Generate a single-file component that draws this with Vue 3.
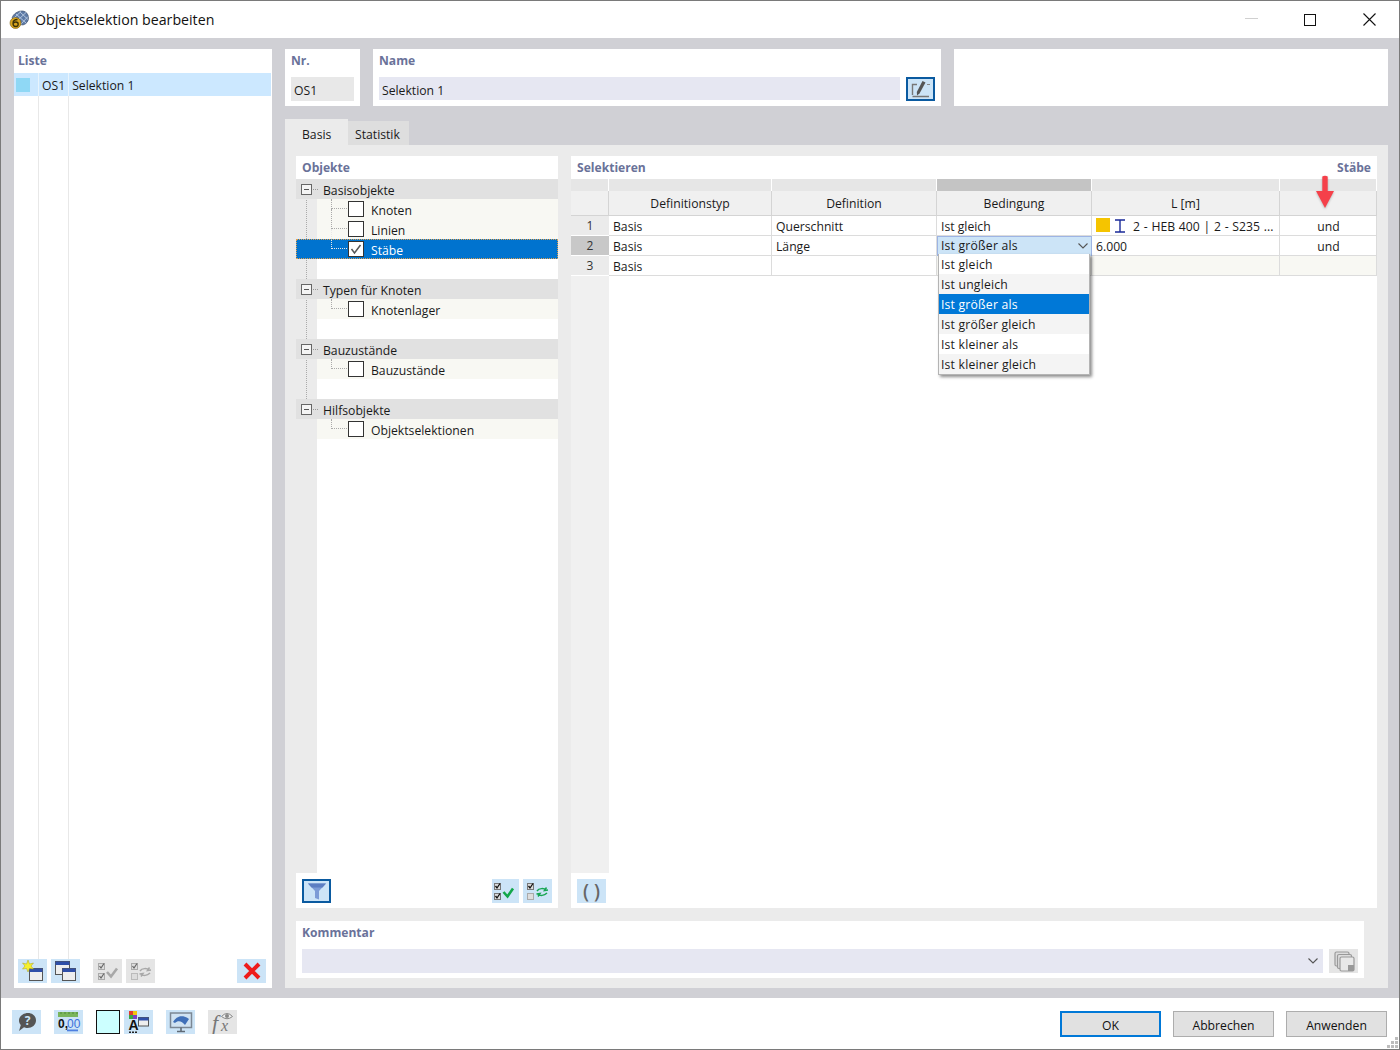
<template>
  <div class="window">
    <header class="titlebar">
      <svg class="app-icon" width="20" height="20" viewBox="0 0 20 20">
        <path d="M3 8 C4 4 9 0.500 14 1 C17 1.500 19.500 4 19.500 8 C19.500 11 17.500 14 14 15 L8 14 Z" fill="#5d7aa6" stroke="#3d4c66" stroke-width=".6" />
        <path d="M7 4 L17 13 M11 2 L19 9.500 M4.500 7 L12 14.500 M8 11 L17 2.500 M5 8 L12 1.500 M12 14 L19 6.500" stroke="#b4c6de" stroke-width="1" />
        <circle cx="6.500" cy="13" r="5.500" fill="#d8a51e" stroke="#7a5e12" stroke-width=".6" />
        <path d="M8.500 9.500 C5.500 9.500 4 11.500 4 13.500 C4 15.500 5.200 16.500 6.700 16.500 C8.200 16.500 9.200 15.500 9.200 14.200 C9.200 12.900 8.200 12 6.800 12 C5.800 12 4.800 12.500 4.300 13.300" fill="none" stroke="#3c3208" stroke-width="1.300" />
      </svg>
      <span class="window-title">Objektselektion bearbeiten</span>
      <div class="window-controls">
        <span class="ctl-min" />
        <span class="ctl-max" />
        <svg class="ctl-close" width="13" height="13" viewBox="0 0 13 13">
          <path d="M.5 .5 L12.500 12.500 M12.500 .5 L.5 12.500" stroke="#111" stroke-width="1.100" />
        </svg>
      </div>
    </header>

    <main class="main">
      <aside class="list-panel">
        <div class="panel-title">Liste</div>
        <div class="list-row">
          <span class="list-swatch" />
          <span class="list-code">OS1</span>
          <span>Selektion 1</span>
        </div>
        <div class="list-body">
          <span class="list-rule rule-a" />
          <span class="list-rule rule-b" />
        </div>
        <div class="list-tools">
          <button class="tool blue">
            <svg width="24" height="24" viewBox="0 0 24 24">
              <rect x="8.500" y="9.500" width="13" height="12" fill="#eee" stroke="#555" />
              <rect x="8.500" y="9.500" width="13" height="3.500" fill="#2f4fa8" />
              <path d="M7 1 L8.500 5 L12.500 4 L10 7 L12.500 10 L8.500 9.500 L7 13 L5.500 9.500 L1.500 10 L4 7 L1.500 4 L5.500 5 Z" fill="#f6f02c" stroke="#a9a020" stroke-width=".5" />
            </svg>
          </button>
          <button class="tool blue">
            <svg width="24" height="24" viewBox="0 0 24 24">
              <rect x="1.500" y="2.500" width="14" height="13" fill="#eee" stroke="#555" />
              <rect x="1.500" y="2.500" width="14" height="3.500" fill="#2f4fa8" />
              <rect x="8.500" y="9.500" width="13" height="12" fill="#eee" stroke="#555" />
              <rect x="8.500" y="9.500" width="13" height="3.500" fill="#2f4fa8" />
            </svg>
          </button>
          <button class="tool gray gap-a">
            <svg width="24" height="24" viewBox="0 0 24 24">
              <rect x="2.500" y="4.500" width="6" height="6" fill="#ddd" stroke="#aaa" />
              <rect x="2.500" y="14.500" width="6" height="6" fill="#ddd" stroke="#aaa" />
              <path d="M3.500 7 L5 9 L8 4.500 M3.500 17 L5 19 L8 14.500" fill="none" stroke="#666" stroke-width="1.200" />
              <path d="M11 13 L15 17.500 L21 9.500" fill="none" stroke="#a8a8a8" stroke-width="2.600" />
            </svg>
          </button>
          <button class="tool gray">
            <svg width="24" height="24" viewBox="0 0 24 24">
              <rect x="2.500" y="4.500" width="6" height="6" fill="#ddd" stroke="#aaa" />
              <rect x="2.500" y="14.500" width="6" height="6" fill="#ddd" stroke="#bbb" />
              <path d="M3.500 7 L5 9 L8 4.500" fill="none" stroke="#666" stroke-width="1.200" />
              <path d="M11 12 C13 9 18 9 20 11 M22 11 L18.500 11.500 L20.500 8.500 M21 14 C18 17 14 17 12 15 M10.500 15 L14 14.500 L12 17.500" fill="none" stroke="#a8a8a8" stroke-width="1.500" />
            </svg>
          </button>
          <button class="tool blue push-right">
            <svg width="24" height="24" viewBox="0 0 24 24">
              <path d="M5 5 L19 19 M19 5 L5 19" stroke="#ee1c1c" stroke-width="4" />
            </svg>
          </button>
        </div>
      </aside>

      <section class="content">
        <div class="top-row">
          <div class="top-box nr-box">
            <div class="panel-title">Nr.</div>
            <div class="field field-gray">OS1</div>
          </div>
          <div class="top-box name-box">
            <div class="panel-title">Name</div>
            <div class="name-row">
              <div class="field field-lilac name-field">Selektion 1</div>
              <button class="tool blue outlined">
                <svg width="25" height="20" viewBox="0 0 25 20">
                  <path d="M9 5.500 H4.500 V16 M4.500 17.500 H21" fill="none" stroke="#777" stroke-width="1.400" />
                  <path d="M19 5.500 H22" stroke="#888" />
                  <path d="M14.500 2 L17.500 3.500 L11.500 14.500 L9 16.500 L8.800 13 Z" fill="#555" />
                </svg>
              </button>
            </div>
          </div>
          <div class="top-box blank-box" />
        </div>

        <nav class="tabs">
          <span class="tab active">Basis</span>
          <span class="tab">Statistik</span>
        </nav>

        <div class="tab-panel">
          <div class="tab-columns">
            <section class="objects">
              <div class="panel-title">Objekte</div>
              <div class="tree">
                <div v-for="group in groups" :key="group.name" class="tree-group">
                  <div class="tree-head">
                    <span class="expander" />
                    <span class="head-dots" />
                    {{ group.name }}
                  </div>
                  <div
                    v-for="(item, i) in group.items"
                    :key="item"
                    class="tree-item"
                    :class="{ selected: item === 'Stäbe' }"
                  >
                    <span class="tree-elbow" :class="{ first: i === 0 }" />
                    <span class="check">
                      <svg v-if="item === 'Stäbe'" width="14" height="14" viewBox="0 0 14 14">
                        <path d="M2.500 7 L5.500 11 L11.500 3" fill="none" stroke="#555" stroke-width="1.500" />
                      </svg>
                    </span>
                    <span>{{ item }}</span>
                  </div>
                  <div class="tree-spacer" />
                </div>
              </div>
              <div class="panel-tools">
                <button class="tool blue filter-btn">
                  <svg width="20" height="20" viewBox="0 0 20 20">
                    <path d="M1 2.500 H19 L12 10 V18.500 L8 17 V10 Z" fill="#7c9bd6" />
                    <path d="M1 2.500 H19 L15.500 6.500 H4.500 Z" fill="#5b7dc2" />
                  </svg>
                </button>
                <button class="tool blue ok-all">
                  <svg width="27" height="24" viewBox="0 0 27 24">
                    <rect x="2.500" y="4.500" width="6" height="6" fill="#ddd" stroke="#777" />
                    <rect x="2.500" y="14.500" width="6" height="6" fill="#ddd" stroke="#777" />
                    <path d="M3.500 7 L5 9 L8 4.500 M3.500 17 L5 19 L8 14.500" fill="none" stroke="#111" stroke-width="1.300" />
                    <path d="M11.500 13 L15.500 17.500 L21 9.500" fill="none" stroke="#12a74a" stroke-width="2.600" />
                  </svg>
                </button>
                <button class="tool blue">
                  <svg width="29" height="24" viewBox="0 0 29 24">
                    <rect x="4.500" y="4.500" width="6" height="6" fill="#ddd" stroke="#777" />
                    <rect x="4.500" y="14.500" width="6" height="6" fill="#ddd" stroke="#aaa" />
                    <path d="M5.500 7 L7 9 L10 4.500" fill="none" stroke="#111" stroke-width="1.300" />
                    <path d="M14 12 C16 9 21 9 23 11 M25 11 L21.500 11.500 L23.500 8.500 M24 14 C21 17 17 17 15 15 M13.500 15 L17 14.500 L15 17.500" fill="none" stroke="#17a553" stroke-width="1.500" />
                  </svg>
                </button>
              </div>
            </section>

            <section class="selection">
              <div class="selection-title">
                <span class="panel-title">Selektieren</span>
                <span class="panel-title">Stäbe</span>
              </div>
              <div class="grid-wrap">
                <div class="gutter" />
                <div class="sel-grid">
                  <div
                    v-for="(col, i) in 6"
                    :key="'band' + i"
                    class="band"
                    :class="{ 'band-active': i === 3 }"
                  />
                  <div v-for="(head, i) in headers" :key="'head' + i" class="head-cell">{{ head }}</div>

                  <div class="num">1</div>
                  <div class="cell">Basis</div>
                  <div class="cell">Querschnitt</div>
                  <div class="cell">Ist gleich</div>
                  <div class="cell section-cell">
                    <span class="yellow-box" />
                    <svg width="12" height="14" viewBox="0 0 12 14">
                      <path d="M1 1 H11 M1 13 H11 M6 1 V13" stroke="#1a2a99" stroke-width="1.400" fill="none" />
                    </svg>
                    <span class="section-text">2 - HEB 400 | 2 - S235 ...</span>
                  </div>
                  <div class="cell center">und</div>

                  <div class="num num-active">2</div>
                  <div class="cell">Basis</div>
                  <div class="cell">Länge</div>
                  <div class="cell combo-cell">
                    <span>Ist größer als</span>
                    <svg width="10" height="6" viewBox="0 0 10 6">
                      <path d="M.5 .5 L5 5 L9.500 .5" fill="none" stroke="#555" stroke-width="1.100" />
                    </svg>
                  </div>
                  <div class="cell">6.000</div>
                  <div class="cell center">und</div>

                  <div class="num">3</div>
                  <div class="cell">Basis</div>
                  <div class="cell" />
                  <div class="cell tint" />
                  <div class="cell tint" />
                  <div class="cell tint" />
                </div>

                <ul class="dropdown">
                  <li
                    v-for="opt in options"
                    :key="opt"
                    :class="{ current: opt === 'Ist größer als' }"
                  >{{ opt }}</li>
                </ul>

                <svg class="red-arrow" width="20" height="34" viewBox="0 0 20 34">
                  <path d="M7.300 1.500 Q10 0 12.700 1.500 V16 H19 L10 33 L1 16 H7.300 Z" fill="#f5404a" />
                </svg>
              </div>
              <div class="panel-tools">
                <button class="tool blue paren-btn">( )</button>
              </div>
            </section>
          </div>

          <section class="comment">
            <div class="panel-title">Kommentar</div>
            <div class="comment-row">
              <div class="field field-lilac comment-field">
                <svg width="10" height="6" viewBox="0 0 10 6">
                  <path d="M.5 .5 L5 5 L9.500 .5" fill="none" stroke="#555" stroke-width="1.100" />
                </svg>
              </div>
              <button class="tool gray">
                <svg width="24" height="24" viewBox="0 0 24 24">
                  <rect x="3" y="3" width="14" height="14" rx="1.500" fill="#ddd" stroke="#999" stroke-width="1.200" />
                  <rect x="5.500" y="5.500" width="14" height="14" rx="1.500" fill="#ddd" stroke="#999" stroke-width="1.200" />
                  <rect x="8" y="8" width="14" height="14" rx="1.500" fill="#e8e8e8" stroke="#999" stroke-width="1.200" />
                  <rect x="16" y="16" width="6" height="6" fill="#999" />
                </svg>
              </button>
            </div>
          </section>
        </div>
      </section>
    </main>

    <footer class="footer">
      <div class="footer-tools">
        <button class="tool blue">
          <svg width="24" height="24" viewBox="0 0 24 24">
            <path d="M13 3 C18 3 21 6.500 21 10.500 C21 15 17 18 12.500 18 C11 18 10 17.800 9 17.300 L4 21 L5.800 15 C4.500 13.500 4 12 4 10.500 C4 6.500 8 3 13 3 Z" fill="#555" />
            <text x="12.500" y="15" class="qmark">?</text>
          </svg>
        </button>
        <button class="tool blue">
          <svg width="29" height="24" viewBox="0 0 29 24">
            <rect x="4" y="2" width="20" height="5" fill="#7ab55c" />
            <path d="M7 2 V4 M11 2 V4 M15 2 V4 M19 2 V4 M23 2 V4" stroke="#4f8a3a" />
            <text x="4" y="18" class="num-black">0,</text>
            <text x="13" y="18" class="num-blue">00</text>
            <rect x="13" y="19.500" width="11" height="1.800" fill="#4d7fe0" />
          </svg>
        </button>
        <span class="color-box" />
        <button class="tool blue">
          <svg width="24" height="24" viewBox="0 0 24 24">
            <rect x="2" y="1" width="4" height="4" fill="#e23b2e" />
            <rect x="6" y="1" width="4" height="4" fill="#f1c40f" />
            <rect x="2" y="5" width="4" height="4" fill="#35a845" />
            <rect x="6" y="5" width="4" height="4" fill="#7b3fc4" />
            <text x="1.500" y="20" class="letter-a">A</text>
            <path d="M2 21.500 H4 V23 H2 Z M5 21.500 H7 V23 H5 Z M8 21.500 H10 V23 H8 Z" fill="#222" />
            <rect x="11.500" y="7.500" width="10" height="8.500" fill="#eee" stroke="#555" />
            <rect x="11.500" y="7.500" width="10" height="3" fill="#2f4fa8" />
          </svg>
        </button>
        <button class="tool blue">
          <svg width="24" height="24" viewBox="0 0 24 24">
            <rect x="1.500" y="3" width="21" height="14.500" fill="#cfe2f2" stroke="#7b8794" stroke-width="1.500" />
            <path d="M4 12 C7 6 14 4 20 9 L16 15 C13 11 9 10 6 13 Z" fill="#3f6fb8" />
            <path d="M12 17.500 V21 M8 21.500 H16" stroke="#5f6a76" stroke-width="1.600" />
          </svg>
        </button>
        <button class="tool gray">
          <svg width="24" height="24" viewBox="0 0 24 24">
            <text x="1" y="20" class="fx-f">f</text>
            <text x="10" y="21" class="fx-x">x</text>
            <path d="M10.500 6.500 Q16 .5 21.500 6.500 Q16 11 10.500 6.500 Z" fill="#eee" stroke="#888" />
            <circle cx="16" cy="6" r="2" fill="#888" />
          </svg>
        </button>
      </div>
      <div class="footer-buttons">
        <button class="dlg-btn primary">OK</button>
        <button class="dlg-btn">Abbrechen</button>
        <button class="dlg-btn">Anwenden</button>
      </div>
      <svg class="grip" width="11" height="11" viewBox="0 0 11 11">
        <path d="M8 0 h3 v3 h-3 Z M4 4 h3 v3 h-3 Z M8 4 h3 v3 h-3 Z M0 8 h3 v3 h-3 Z M4 8 h3 v3 h-3 Z M8 8 h3 v3 h-3 Z" fill="#bdbdbd" />
      </svg>
    </footer>
  </div>
</template>

<script setup>
const groups = [
  { name: "Basisobjekte", items: ["Knoten", "Linien", "Stäbe"] },
  { name: "Typen für Knoten", items: ["Knotenlager"] },
  { name: "Bauzustände", items: ["Bauzustände"] },
  { name: "Hilfsobjekte", items: ["Objektselektionen"] }
];

const headers = ["", "Definitionstyp", "Definition", "Bedingung", "L [m]", ""];

const options = [
  "Ist gleich",
  "Ist ungleich",
  "Ist größer als",
  "Ist größer gleich",
  "Ist kleiner als",
  "Ist kleiner gleich"
];
</script>

<style>
html, body {
  margin: 0;
  background: #fff;
}
</style>

<style scoped>
.window {
  box-sizing: border-box;
  width: 1400px;
  height: 1050px;
  display: flex;
  flex-direction: column;
  border: 1px solid #7a7a7a;
  font-family: "Open Sans", "Noto Sans", sans-serif;
  font-size: 12.2px;
  color: #1a1a1a;
  background: #fff;
  overflow: hidden;
}

button {
  font-family: inherit;
  padding: 0;
  border: 0;
}

/* TITLE BAR */
.titlebar {
  height: 37px;
  flex-shrink: 0;
  display: flex;
  align-items: center;
  padding-left: 8px;
}

.app-icon {
  margin-right: 6px;
}

.window-title {
  font-size: 14.2px;
  color: #111;
}

.window-controls {
  margin-left: auto;
  display: flex;
  align-items: center;
}

.ctl-min {
  width: 13px;
  height: 1px;
  margin-top: -3px;
  margin-right: 46px;
  background: #d0d0d0;
}

.ctl-max {
  box-sizing: border-box;
  width: 12px;
  height: 12px;
  border: 1.500px solid #111;
  margin-right: 47px;
}

.ctl-close {
  margin-right: 23px;
}

/* MAIN */
.main {
  flex: 1;
  min-height: 0;
  display: flex;
  gap: 13px;
  padding: 11px 11px 10px 13px;
  background: #d0d0d5;
}

.panel-title {
  font-weight: 700;
  font-size: 12.1px;
  color: #6a7299;
}

.list-panel {
  width: 258px;
  flex-shrink: 0;
  display: flex;
  flex-direction: column;
  background: #fff;
}

.list-panel > .panel-title {
  height: 24px;
  line-height: 23px;
  padding-left: 4px;
}

.list-row {
  height: 23px;
  display: flex;
  align-items: center;
  margin-right: 1px;
  padding-top: 1px;
  box-sizing: border-box;
  background:
    linear-gradient(#e8f4fd, #e8f4fd) 24px 0 / 1px 100% no-repeat,
    linear-gradient(#e8f4fd, #e8f4fd) 54px 0 / 1px 100% no-repeat,
    #cce8ff;
}

.list-swatch {
  width: 14px;
  height: 14px;
  margin-left: 2px;
  margin-top: -1px;
  background: #8fd8f5;
}

.list-code {
  margin-left: 12px;
  margin-right: 7px;
}

.list-body {
  flex: 1;
  position: relative;
}

.list-rule {
  position: absolute;
  top: 0;
  bottom: 0;
  width: 1px;
  background: #e8e8e8;
}

.rule-a { left: 24px; }
.rule-b { left: 54px; }

.list-tools {
  display: flex;
  align-items: center;
  height: 29px;
  box-sizing: border-box;
  padding: 0 6px 5px 4px;
}

.list-tools .tool + .tool {
  margin-left: 4px;
}

.list-tools .gap-a {
  margin-left: 13px !important;
}

.list-tools .push-right {
  margin-left: auto !important;
}

.tool {
  width: 29px;
  height: 24px;
  display: inline-flex;
  align-items: center;
  justify-content: center;
  flex-shrink: 0;
}

.tool.blue { background: #cce4f7; }
.tool.gray { background: #e5e5e5; }

.outlined,
.filter-btn {
  box-sizing: border-box;
  border: 2px solid #0a5aa0;
}

/* RIGHT SIDE */
.content {
  flex: 1;
  min-width: 0;
  display: flex;
  flex-direction: column;
}

.top-row {
  height: 57px;
  flex-shrink: 0;
  display: flex;
  gap: 13px;
}

.top-box {
  background: #fff;
  box-sizing: border-box;
}

.top-box > .panel-title {
  height: 28px;
  line-height: 23px;
}

.nr-box {
  width: 75px;
  padding: 0 6px;
}

.name-box {
  width: 568px;
  padding: 0 6px;
}

.blank-box {
  flex: 1;
}

.field {
  height: 24px;
  line-height: 28px;
  box-sizing: border-box;
  padding-left: 3px;
}

.field-gray { background: #e8e8e8; }
.field-lilac { background: #e6e7f2; }

.name-row {
  display: flex;
  gap: 6px;
}

.name-field {
  flex: 1;
  height: 23px;
}

/* TABS */
.tabs {
  display: flex;
  align-items: flex-end;
  height: 39px;
  flex-shrink: 0;
}

.tab {
  box-sizing: border-box;
  width: 61px;
  height: 24px;
  line-height: 28px;
  padding-left: 7px;
  background: #dedede;
}

.tab.active {
  width: 63px;
  height: 26px;
  line-height: 26px;
  padding: 3px 0 0 17px;
  background: #ebebeb;
}

.tab-panel {
  flex: 1;
  min-height: 0;
  display: flex;
  flex-direction: column;
  gap: 13px;
  padding: 11px 11px 10px;
  background: #ebebeb;
}

.tab-columns {
  flex: 1;
  min-height: 0;
  display: flex;
  gap: 13px;
}

/* OBJECTS TREE */
.objects {
  width: 262px;
  flex-shrink: 0;
  display: flex;
  flex-direction: column;
  background: #fff;
}

.objects > .panel-title {
  height: 23px;
  line-height: 23px;
  padding-left: 6px;
}

.tree {
  flex: 1;
  min-height: 0;
  background: linear-gradient(to right, #ebebeb 21px, #fff 21px);
}

.tree-group {
  position: relative;
}

.tree-group:not(:last-child)::before {
  content: "";
  position: absolute;
  left: 10px;
  top: 15px;
  bottom: -6px;
  border-left: 1px dotted #aaa;
}

.tree-head {
  position: relative;
  height: 20px;
  line-height: 24px;
  padding-left: 27px;
  background: #e1e1e1;
}

.expander {
  position: absolute;
  left: 5px;
  top: 5px;
  box-sizing: border-box;
  width: 11px;
  height: 11px;
  border: 1px solid #666;
  background: linear-gradient(#555, #555) center / 5px 1px no-repeat #f4f4f4;
}

.head-dots {
  position: absolute;
  left: 17px;
  top: 10px;
  width: 5px;
  border-top: 1px dotted #999;
}

.tree-item {
  position: relative;
  height: 20px;
  display: flex;
  align-items: center;
  margin-left: 21px;
  padding-left: 31px;
  gap: 7px;
  background: #f8f8f3;
}

.tree-item > span:last-child {
  padding-top: 3px;
}

.tree-item.selected {
  margin-left: 0;
  padding-left: 52px;
  background: #0073cf;
  color: #fff;
  outline: 1px dotted #e0a050;
  outline-offset: -1px;
}

.tree-elbow {
  position: absolute;
  left: 14px;
  top: -10px;
  width: 16px;
  height: 20px;
  border-left: 1px dotted #aaa;
  border-bottom: 1px dotted #aaa;
  box-sizing: border-box;
}

.tree-elbow.first {
  top: 0;
  height: 10px;
}

.selected .tree-elbow {
  left: 35px;
  border-color: #e8e8e8;
}

.check {
  box-sizing: border-box;
  width: 16px;
  height: 16px;
  display: flex;
  align-items: center;
  justify-content: center;
  border: 1px solid #333;
  background: #fff;
}

.tree-spacer {
  height: 20px;
}

.tree-group:last-child .tree-spacer {
  display: none;
}

.panel-tools {
  height: 35px;
  flex-shrink: 0;
  display: flex;
  align-items: flex-start;
  gap: 4px;
  padding: 6px 6px 0;
  box-sizing: border-box;
}

.ok-all {
  width: 27px;
  margin-left: auto;
}

/* SELECTION GRID */
.selection {
  flex: 1;
  min-width: 0;
  display: flex;
  flex-direction: column;
  background: #fff;
}

.selection-title {
  height: 23px;
  flex-shrink: 0;
  display: flex;
  justify-content: space-between;
  align-items: center;
  padding: 0 6px;
}

.grid-wrap {
  flex: 1;
  min-height: 0;
  position: relative;
}

.gutter {
  position: absolute;
  left: 0;
  top: 0;
  bottom: 0;
  width: 38px;
  background: #f0f0f0;
}

.sel-grid {
  position: relative;
  display: grid;
  grid-template-columns: 38px 163px 165px 155px 188px 97px;
  grid-template-rows: 12px 25px 20px 20px 20px;
}

.band {
  background: #e6e6e6;
  border-right: 1px solid #fff;
  box-sizing: border-box;
}

.band-active {
  background: #c4c4c4;
}

.head-cell {
  display: flex;
  align-items: center;
  justify-content: center;
  background: #f0f0f0;
  border-right: 1px solid #d4d4d4;
  border-bottom: 1px solid #d4d4d4;
  box-sizing: border-box;
  padding-top: 1px;
}

.num {
  display: flex;
  align-items: center;
  justify-content: center;
  background: #ebebeb;
  border-bottom: 1px solid #fff;
  box-sizing: border-box;
  color: #333;
  font-size: 12px;
}

.num-active {
  background: #c8c8c8;
}

.cell {
  display: flex;
  align-items: center;
  padding-left: 4px;
  padding-top: 1px;
  background: #fff;
  border-right: 1px solid #dcdcdc;
  border-bottom: 1px solid #dcdcdc;
  box-sizing: border-box;
  white-space: nowrap;
  overflow: hidden;
}

.center {
  justify-content: center;
  padding-right: 3px;
}

.tint {
  background: #f8f8f3;
}

.section-cell {
  gap: 4px;
}

.yellow-box {
  width: 14px;
  height: 14px;
  margin-top: -2px;
  background: #f5c400;
}

.section-text {
  margin-left: 3px;
  word-spacing: 0.6px;
}

.combo-cell {
  justify-content: space-between;
  padding: 0 3px 2px;
  letter-spacing: 0.2px;
  background: #cce4f7;
  border: 1px solid #9db4e4;
  border-bottom: 0;
}

.dropdown {
  position: absolute;
  left: 367px;
  top: 75px;
  width: 150px;
  margin: 0;
  padding: 0;
  list-style: none;
  letter-spacing: 0.2px;
  background: #fff;
  border: 1px solid #b4b4b4;
  border-top: 0;
  box-shadow: 2px 2px 3px rgba(0, 0, 0, 0.45);
}

.dropdown li {
  height: 20px;
  line-height: 21px;
  padding-left: 2px;
}

.dropdown li:nth-child(even) {
  background: #f4f4f4;
}

.dropdown li.current {
  background: #0078d7;
  color: #fff;
}

.red-arrow {
  position: absolute;
  left: 744px;
  top: -4px;
  filter: drop-shadow(0 1px 1px rgba(0, 0, 0, 0.25));
}

.paren-btn {
  font-size: 19px;
  font-weight: 600;
  color: #666;
  line-height: 22px;
}

/* COMMENT */
.comment {
  height: 57px;
  flex-shrink: 0;
  margin-right: 13px;
  box-sizing: border-box;
  padding: 0 6px;
  background: #fff;
}

.comment > .panel-title {
  height: 28px;
  line-height: 23px;
}

.comment-row {
  display: flex;
  gap: 6px;
}

.comment-field {
  flex: 1;
  display: flex;
  align-items: center;
  justify-content: flex-end;
  padding-right: 5px;
}

/* FOOTER */
.footer {
  position: relative;
  height: 51px;
  flex-shrink: 0;
  display: flex;
  justify-content: space-between;
  align-items: flex-start;
  padding: 12px 12px 0 11px;
  box-sizing: border-box;
}

.footer-tools {
  display: flex;
  gap: 13px;
}

.color-box {
  box-sizing: border-box;
  width: 24px;
  height: 24px;
  margin-right: -9px;
  border: 1.500px solid #111;
  background: #ccffff;
}

.footer-buttons {
  display: flex;
  gap: 12px;
  padding-top: 1px;
}

.dlg-btn {
  box-sizing: border-box;
  width: 101px;
  height: 26px;
  background: #e1e1e1;
  border: 1px solid #adadad;
  color: #111;
  font-size: 12.2px;
  padding-top: 2px;
}

.dlg-btn.primary {
  border: 2px solid #0078d7;
}

.grip {
  position: absolute;
  right: 1px;
  bottom: 1px;
}

/* svg text */
.qmark {
  font: 700 12px "Open Sans", sans-serif;
  fill: #cce4f7;
  text-anchor: middle;
}

.num-black {
  font: 700 12px "Liberation Sans", sans-serif;
  fill: #111;
}

.num-blue {
  font: 400 12px "Liberation Sans", sans-serif;
  fill: #3a6fdc;
}

.letter-a {
  font: 700 14px "Liberation Sans", sans-serif;
  fill: #111;
}

.fx-f {
  font: italic 400 22px "Liberation Serif", serif;
  fill: #777;
}

.fx-x {
  font: italic 400 16px "Liberation Serif", serif;
  fill: #777;
}
</style>
